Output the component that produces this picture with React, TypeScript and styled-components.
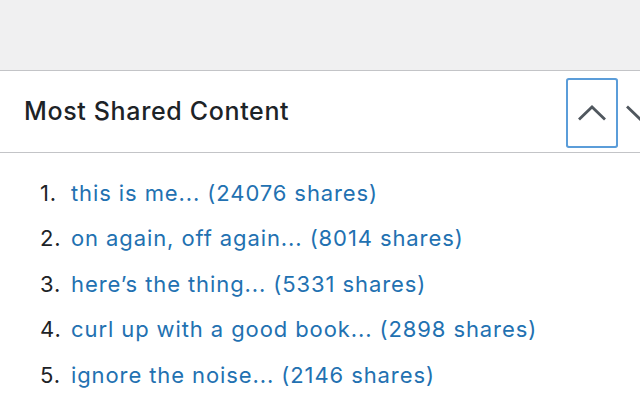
import React from "react";
import styled, { createGlobalStyle } from "styled-components";

const Global = createGlobalStyle`
  html, body { margin: 0; padding: 0; background: #f0f0f1; }
  body { font-family: Inter, "Noto Sans", sans-serif; -webkit-font-smoothing: antialiased; }
`;

const Page = styled.div`
  width: 640px;
  height: 403px;
  overflow: hidden;
  display: flex;
  flex-direction: column;
`;

const TopArea = styled.div`
  height: 70px;
  flex: none;
  background: #f0f0f1;
`;

const Card = styled.section`
  flex: 1;
  background: #ffffff;
  border-top: 1px solid #c3c4c7;
`;

const Header = styled.div`
  height: 81px;
  border-bottom: 1px solid #c3c4c7;
  display: flex;
  align-items: flex-start;
  padding-left: 24px;
`;

const Title = styled.h2`
  margin: 0;
  flex: 1;
  font-size: 25px;
  font-weight: 500;
  color: #1d2327;
  line-height: 80px;
  letter-spacing: 0.65px;
  white-space: nowrap;
`;

const Controls = styled.div`
  display: flex;
  flex: none;
  margin-top: 9px;
  margin-right: -24px;
`;

const ToggleButton = styled.button<{ $focused?: boolean }>`
  width: 48px;
  height: 66px;
  padding: 0;
  border: none;
  background: transparent;
  display: flex;
  align-items: center;
  justify-content: center;
  color: #50575e;
  box-shadow: ${(p) => (p.$focused ? "0 0 0 2px #5b9dd9" : "none")};
  border-radius: 1px;
  cursor: pointer;
`;

const List = styled.ol`
  list-style: none;
  margin: 0;
  padding: 17px 0 0 40px;
  display: flex;
  flex-direction: column;
`;

const Item = styled.li`
  display: flex;
  height: 45.5px;
  align-items: center;
  font-size: 22px;
  line-height: 30px;
  letter-spacing: 0.9px;
`;

const Num = styled.span`
  width: 31px;
  flex: none;
  color: #1d2327;
`;

const Link = styled.a`
  color: #2271b1;
  text-decoration: none;
  white-space: nowrap;
`;

const Chevron = ({ dir }: { dir: "up" | "down" }) => (
  <svg width="30" height="16" viewBox="0 0 30 16" fill="none">
    <path
      d={dir === "up" ? "M2 14.5 L15 2 L28 14.5" : "M2 1.5 L15 14 L28 1.5"}
      stroke="currentColor"
      strokeWidth="2.8"
      strokeLinecap="butt"
      strokeLinejoin="miter"
    />
  </svg>
);

const items = [
  { title: "this is me...", shares: 24076 },
  { title: "on again, off again...", shares: 8014 },
  { title: "here’s the thing...", shares: 5331 },
  { title: "curl up with a good book...", shares: 2898 },
  { title: "ignore the noise...", shares: 2146 },
];

export default function App() {
  return (
    <Page>
      <Global />
      <TopArea />
      <Card>
        <Header>
          <Title>Most Shared Content</Title>
          <Controls>
            <ToggleButton $focused aria-label="Move up">
              <Chevron dir="up" />
            </ToggleButton>
            <ToggleButton aria-label="Move down">
              <Chevron dir="down" />
            </ToggleButton>
          </Controls>
        </Header>
        <List>
          {items.map((it, i) => (
            <Item key={i}>
              <Num>{i + 1}.</Num>
              <Link href="#">
                {it.title} ({it.shares} shares)
              </Link>
            </Item>
          ))}
        </List>
      </Card>
    </Page>
  );
}
